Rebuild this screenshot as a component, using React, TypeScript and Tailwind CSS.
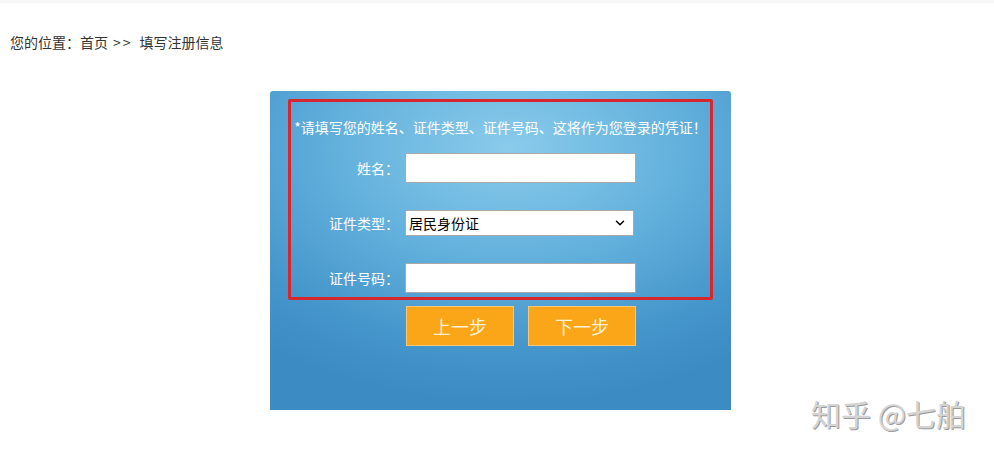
import { ChevronDown } from "lucide-react";

const font = "font-['Noto_Sans_CJK_SC','Noto_Sans',sans-serif]";

const Field = ({ label, children }: { label: string; children: React.ReactNode }) => (
    <div className="flex items-center">
        <span className="w-[114px] pr-[6px] text-right text-[14px] text-white">{label}</span>
        {children}
    </div>
);

export default function App() {
    return (
        <div className={`relative h-[457px] w-full overflow-hidden bg-white ${font}`}>
            <div className="h-[3px] bg-[#f6f6f6]" />
            <p className="ml-[10px] mt-[30px] text-[14px] leading-[18px] text-[#333]">
                您的位置：首页
                <span className="ml-[5px] mr-[7px] tracking-[2px]">&gt;&gt;</span>
                填写注册信息
            </p>
            <div className="ml-[270px] mt-[40px] h-[319px] w-[461px] rounded-t-[3px] bg-[radial-gradient(ellipse_85%_80%_at_52%_18%,#8acbeb_0%,#66b3de_40%,#4596cb_78%,#3c8bc3_100%)] pt-[8px]">
                <div className="ml-[18px] h-[201px] w-[425px] rounded-[2px] border-[3px] border-[#d8262e]">
                    <p className="mt-[16px] text-center text-[14px] leading-[18px] text-white">
                        *请填写您的姓名、证件类型、证件号码、这将作为您登录的凭证！
                    </p>
                    <div className="mt-[17px] flex flex-col">
                        <Field label="姓名：">
                            <input className="h-[30px] w-[231px] border border-[#a9a9a9] bg-white outline-none" />
                        </Field>
                        <div className="mt-[27px]">
                            <Field label="证件类型：">
                                <div className="flex h-[26px] w-[229px] items-center justify-between border border-[#a9a9a9] bg-white pl-[3px] pr-[6px] text-[14px] text-black">
                                    <span>居民身份证</span>
                                    <ChevronDown className="h-[14px] w-[14px]" strokeWidth={2.5} />
                                </div>
                            </Field>
                        </div>
                        <div className="mt-[27px]">
                            <Field label="证件号码：">
                                <input className="h-[30px] w-[231px] border border-[#a9a9a9] bg-white outline-none" />
                            </Field>
                        </div>
                    </div>
                </div>
                <div className="ml-[136px] mt-[6px] flex gap-[14px]">
                    <button className="h-[40px] w-[108px] border border-[#f7c77a] bg-[#fba519] text-[18px] text-[#fdf1d6]">
                        上一步
                    </button>
                    <button className="h-[40px] w-[108px] border border-[#f7c77a] bg-[#fba519] text-[18px] text-[#fdf1d6]">
                        下一步
                    </button>
                </div>
            </div>
            <div className="absolute left-[811px] top-[395px] whitespace-pre text-[30px] leading-[36px] text-[#d4d4d4] [text-shadow:1px_1px_0_#9a9a9a]">
                {"知乎 @七舶"}
            </div>
        </div>
    );
}
